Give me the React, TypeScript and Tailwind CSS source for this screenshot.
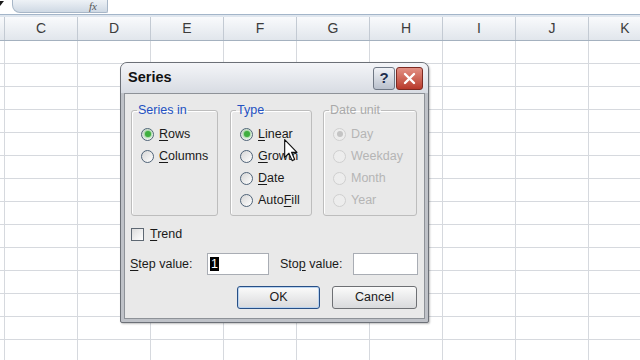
import React from 'react';

const cols = ['C', 'D', 'E', 'F', 'G', 'H', 'I', 'J', 'K'];
const rows = Array.from({ length: 14 }, (_, i) => i);

function Radio({ checked, disabled }: { checked?: boolean; disabled?: boolean }) {
  return (
    <span
      className={`w-[13px] h-[13px] shrink-0 rounded-full border flex items-center justify-center ${
        disabled
          ? 'border-[#cfcfcf] bg-[#ededed]'
          : 'border-[#4f6378] bg-gradient-to-br from-[#d6d6d6] to-[#ffffff]'
      }`}
    >
      {checked && (
        <span
          className={`w-[6px] h-[6px] rounded-full ${
            disabled ? 'bg-[#c4c4c4]' : 'bg-[#3fae3f] shadow-[0_0_2px_1px_rgba(120,205,120,0.8)]'
          }`}
        />
      )}
    </span>
  );
}

function Option({
  label,
  u,
  checked,
  disabled,
}: {
  label: string;
  u?: number;
  checked?: boolean;
  disabled?: boolean;
}) {
  const parts =
    u === undefined
      ? [label]
      : [label.slice(0, u), <span key="u" className="underline underline-offset-[2px]">{label[u]}</span>, label.slice(u + 1)];
  return (
    <div className="h-[22px] flex items-center gap-[5px]">
      <Radio checked={checked} disabled={disabled} />
      <span className={disabled ? 'text-[#b5b5b5]' : 'text-[#1a1a1a]'}>{parts}</span>
    </div>
  );
}

function Group({
  title,
  width,
  disabled,
  className,
  children,
}: {
  title: string;
  width: string;
  disabled?: boolean;
  className?: string;
  children: React.ReactNode;
}) {
  return (
    <fieldset
      className={`${width} h-[113px] shrink-0 rounded-[3px] border border-[#bdbdbd] shadow-[inset_1px_1px_0_#ffffff] ${className ?? ''}`}
    >
      <legend className={`ml-[5px] px-[1px] leading-[14px] ${disabled ? 'text-[#a9a9a9]' : 'text-[#2351c2]'}`}>
        {title}
      </legend>
      <div className="mt-[6px] pl-[9px] flex flex-col">{children}</div>
    </fieldset>
  );
}

export default function App() {
  return (
    <div className="relative w-[640px] h-[360px] overflow-hidden bg-white font-['Liberation_Sans',Arial,sans-serif] text-[12.5px]">
      {/* formula bar strip */}
      <div className="h-[14px] flex items-start">
        <svg width="4" height="6" viewBox="0 0 4 6" className="mt-[1px] shrink-0">
          <path d="M0 0 L4 0 L0 5 Z" fill="#1a1a1a" />
        </svg>
        <div className="ml-[8px] w-[96px] h-[13px] rounded-bl-[8px] rounded-br-[2px] border border-t-0 border-[#a7b6c7] bg-gradient-to-b from-[#eef2f6] to-[#cfd9e4] flex items-center justify-end pr-[10px]">
          <span className="font-['Liberation_Serif',serif] italic text-[11px] leading-none text-[#555]">fx</span>
        </div>
      </div>
      <div className="h-[3px] border-t border-[#a3b5c9] bg-[#dfe6ee]" />

      {/* column headers */}
      <div className="flex h-[24px] border-b border-[#a4b1bf] bg-gradient-to-b from-[#f9fafc] to-[#e1e6ec]">
        <div className="w-[5px] shrink-0 border-r border-[#c3cad3]" />
        {cols.map((c) => (
          <div
            key={c}
            className="w-[73px] shrink-0 border-r border-[#c3cad3] flex items-center justify-center text-[14px] text-[#3c3c3c]"
          >
            {c}
          </div>
        ))}
      </div>

      {/* grid */}
      {rows.map((r) => (
        <div key={r} className="flex h-[23px] border-b border-[#d6d9de]">
          <div className="w-[5px] shrink-0 border-r border-[#d6d9de]" />
          {cols.map((c) => (
            <div key={c} className="w-[73px] shrink-0 border-r border-[#d6d9de]" />
          ))}
        </div>
      ))}

      {/* Series dialog */}
      <div className="absolute left-[120px] top-[62px] w-[309px] h-[261px] flex flex-col rounded-t-[7px] rounded-b-[2px] border border-[#6c7077] bg-[#bfc2c8] shadow-[1px_1px_2px_rgba(0,0,0,0.25)]">
        <div className="h-[30px] shrink-0 flex items-center justify-between pl-[7px] pr-[5px] rounded-t-[6px] bg-gradient-to-b from-[#f4f5f8] to-[#d8dce3]">
          <span className="font-bold text-[14.5px] text-[#111]">Series</span>
          <div className="flex gap-[1px]">
            <div className="w-[22px] h-[23px] rounded-[3px] border border-[#6f7784] bg-gradient-to-b from-[#f1f3f7] to-[#b9c0cc] flex items-center justify-center font-bold text-[15px] text-[#1f2d4d]">
              ?
            </div>
            <div className="w-[27px] h-[23px] rounded-[3px] border border-[#7d2a22] bg-gradient-to-b from-[#e29084] to-[#b8392b] flex items-center justify-center">
              <svg width="13" height="13" viewBox="0 0 13 13">
                <path d="M2 2 L11 11 M11 2 L2 11" stroke="#ffffff" strokeWidth="2.4" strokeLinecap="round" />
              </svg>
            </div>
          </div>
        </div>

        <div className="flex-1 mx-[3px] mb-[3px] border border-[#8e9298] bg-[#e9e9e9] flex flex-col pt-[9px]">
          <div className="flex pl-[6px]">
            <Group title="Series in" width="w-[87px]">
              <Option label="Rows" u={0} checked />
              <Option label="Columns" u={0} />
            </Group>
            <Group title="Type" width="w-[82px]" className="ml-[12px]">
              <Option label="Linear" u={0} checked />
              <Option label="Growth" u={0} />
              <Option label="Date" u={0} />
              <Option label="AutoFill" u={4} />
            </Group>
            <Group title="Date unit" width="w-[94px]" className="ml-[11px]" disabled>
              <Option label="Day" checked disabled />
              <Option label="Weekday" disabled />
              <Option label="Month" disabled />
              <Option label="Year" disabled />
            </Group>
          </div>

          <div className="mt-[12px] pl-[6px] flex items-center h-[13px]">
            <span className="w-[13px] h-[13px] border border-[#5e6873] bg-gradient-to-br from-[#dcdcdc] to-[#ffffff]" />
            <span className="ml-[6px] text-[#1a1a1a]">
              <span className="underline underline-offset-[2px]">T</span>rend
            </span>
          </div>

          <div className="mt-[12px] pl-[5px] flex items-center h-[22px]">
            <span className="w-[77px] text-[#1a1a1a]">
              <span className="underline underline-offset-[2px]">S</span>tep value:
            </span>
            <div className="w-[62px] h-[22px] border border-[#a9adb4] bg-white flex items-center pl-[2px]">
              <span className="bg-black text-white leading-[14px] px-[1px]">1</span>
            </div>
            <span className="ml-[11px] w-[73px] text-[#1a1a1a]">
              Sto<span className="underline underline-offset-[2px]">p</span> value:
            </span>
            <div className="w-[65px] h-[22px] border border-[#a9adb4] bg-white" />
          </div>

          <div className="mt-[11px] pl-[112px] flex">
            <button className="w-[83px] h-[23px] rounded-[3px] border border-[#274f86] bg-gradient-to-b from-[#fbfbfb] to-[#d9dadc] shadow-[inset_0_0_0_1px_#b9d3f0] text-[#1a1a1a]">
              OK
            </button>
            <button className="ml-[12px] w-[85px] h-[23px] rounded-[3px] border border-[#6e7074] bg-gradient-to-b from-[#fbfbfb] to-[#d9dadc] text-[#1a1a1a]">
              Cancel
            </button>
          </div>
        </div>
      </div>

      {/* mouse pointer */}
      <svg width="14" height="23" viewBox="0 0 12 20" className="absolute left-[284px] top-[139px]">
        <path d="M0.5 0.5 L0.5 16 L4.2 12.4 L7 18.8 L9.2 17.8 L6.5 11.6 L11.2 11.6 Z" fill="#ffffff" stroke="#111" strokeWidth="1" strokeLinejoin="round" />
      </svg>
    </div>
  );
}
